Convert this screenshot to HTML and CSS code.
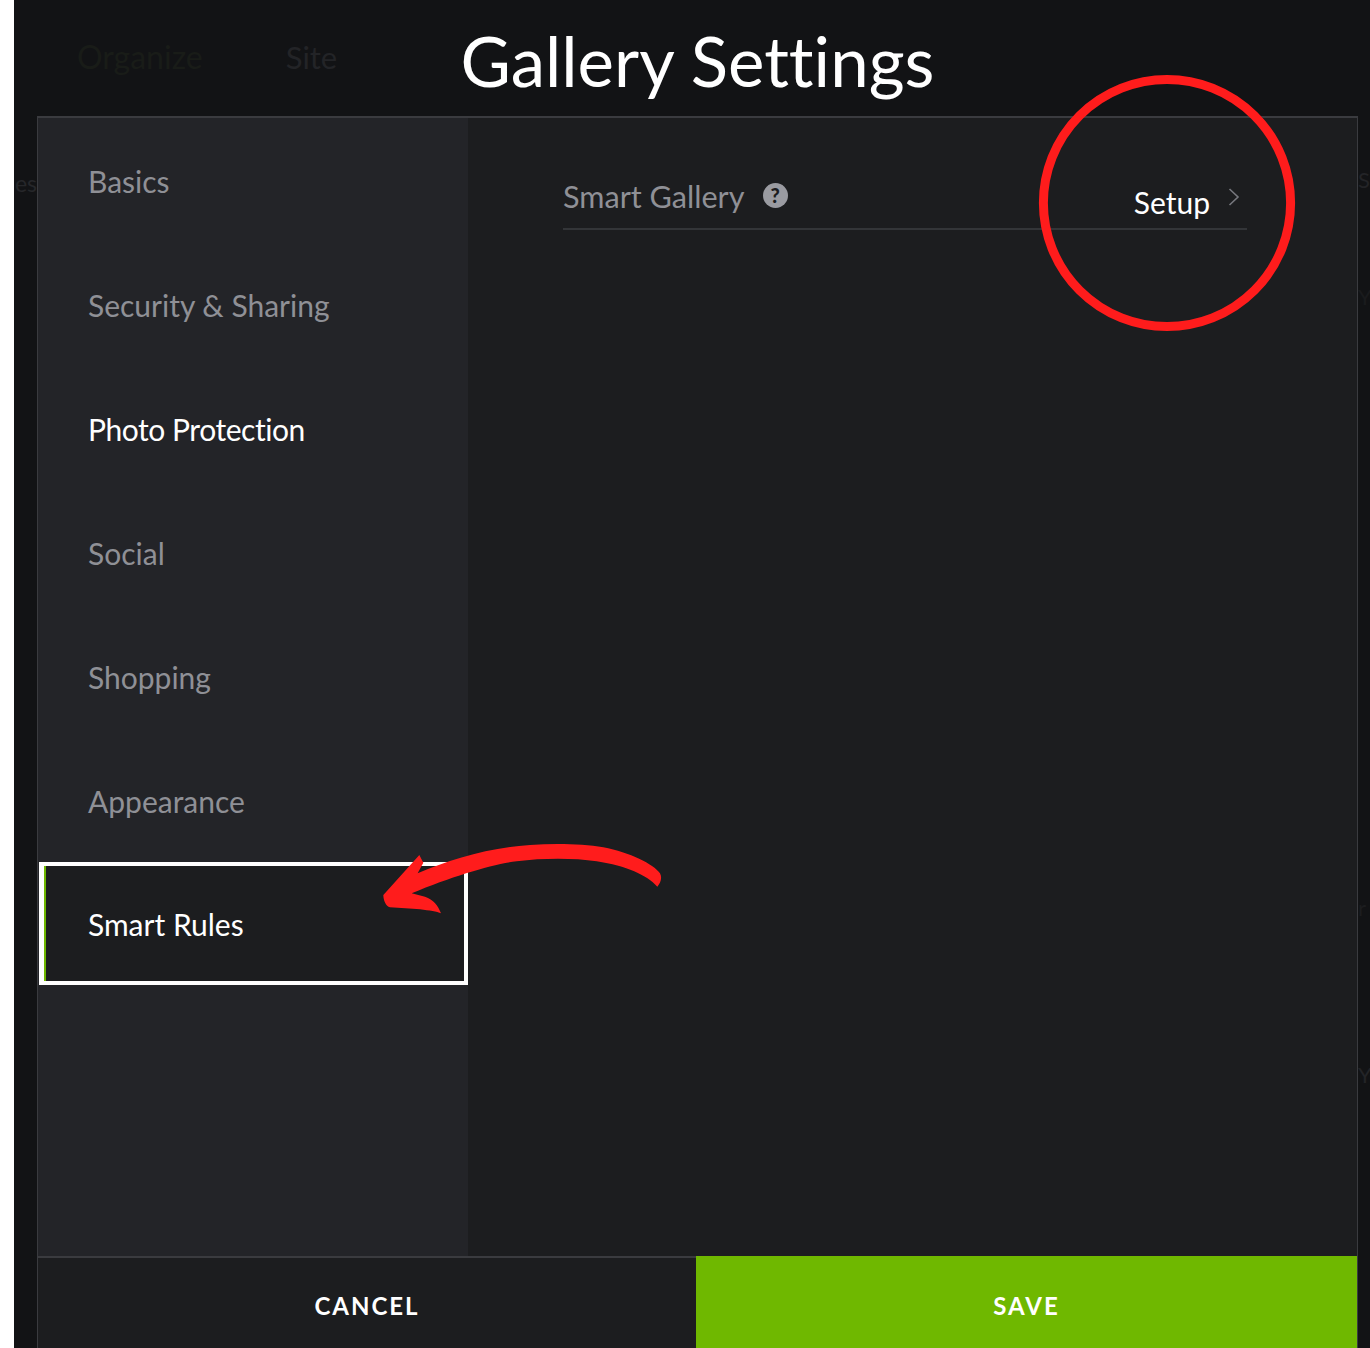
FILE: index.html
```html
<!DOCTYPE html>
<html lang="en">
<head>
<meta charset="utf-8">
<title>Gallery Settings</title>
<link rel="stylesheet" href="styles.css">
</head>
<body>
<div class="page">
  <div class="strip"></div>
  <div class="stage">
    <header class="header">
      <nav class="ghost-nav">
        <span class="ghost-organize">Organize</span>
        <span class="ghost-site">Site</span>
      </nav>
      <h1 class="title">Gallery Settings</h1>
      <div></div>
    </header>
    <div class="middle">
      <div class="gutter gutter-left"><span class="ghost-es">es</span></div>
      <main class="modal">
        <div class="modal-body">
          <aside class="sidebar">
            <div class="item">Basics</div>
            <div class="item">Security &amp; Sharing</div>
            <div class="item item-light">Photo Protection</div>
            <div class="item">Social</div>
            <div class="item">Shopping</div>
            <div class="item">Appearance</div>
            <div class="item item-active">Smart Rules</div>
          </aside>
          <section class="content">
            <div class="setting">
              <div class="setting-label">
                <span>Smart Gallery</span>
                <span class="help">?</span>
              </div>
              <div class="setting-action">
                <span>Setup</span>
                <svg class="chevron" width="12" height="20" viewBox="0 0 12 20"><path d="M1.5 2 L10 10 L1.5 18" fill="none" stroke="#77787e" stroke-width="1.6"/></svg>
              </div>
            </div>
          </section>
        </div>
        <footer class="footer">
          <div class="btn btn-cancel">CANCEL</div>
          <div class="btn btn-save">SAVE</div>
        </footer>
      </main>
      <div class="gutter gutter-right">
        <span class="ghost-s">S</span>
        <span class="ghost-t">Y</span>
        <span class="ghost-r">r</span>
        <span class="ghost-y">Y</span>
      </div>
    </div>
  </div>
</div>
<svg class="annotations" width="1370" height="1348" viewBox="0 0 1370 1348">
  <circle cx="1167" cy="203" r="123.6" fill="none" stroke="#ff1c1c" stroke-width="9"/>
  <path transform="translate(370 840) scale(0.33333)" fill="#ff1c1c" d="M40 165 L148 45 L160 68 L143 100 C240 58 360 22 480 15 C560 10 640 12 700 22 C780 38 850 72 870 100 C878 115 870 130 862 140 C830 105 770 78 680 64 C610 54 520 54 440 64 C370 72 250 108 125 160 L165 170 C190 178 205 198 213 220 C190 210 120 205 60 202 C48 200 40 180 40 165 Z"/>
</svg>
</body>
</html>
```
FILE: styles.css
```css
* { box-sizing: border-box; }
html, body { margin: 0; padding: 0; background: #fff; }
body { font-family: "Lato", "Liberation Sans", sans-serif; font-variant-ligatures: none; width: 1370px; height: 1348px; overflow: hidden; position: relative; }
.page { display: flex; width: 1370px; height: 1348px; }
.strip { width: 14px; background: #fff; flex: none; }
.stage { flex: 1; display: flex; flex-direction: column; background: #121315; min-width: 0; }
.header { height: 116px; flex: none; display: grid; grid-template-columns: 1fr auto 1fr; padding: 0 12px 0 23px; align-items: center; }
.ghost-nav { display: flex; gap: 83px; padding-left: 40px; font-size: 32px; align-self: start; margin-top: 37px; line-height: 40px; }
.ghost-organize { color: #191c18; }
.ghost-site { color: #232427; font-size: 31px; }
.title { margin: 0; font-size: 69px; font-weight: 400; color: #fff; line-height: 1; white-space: nowrap; margin-top: 5px; }
.middle { flex: 1; display: flex; min-height: 0; }
.gutter { flex: none; display: flex; flex-direction: column; font-size: 23px; line-height: 34px; color: #232427; padding-top: 50px; white-space: nowrap; }
.gutter-left { width: 23px; align-items: flex-end; }
.gutter-right { width: 12px; padding-top: 47px; font-size: 22px; }
.ghost-es { color: #26272a; }
.ghost-s { color: #232427; }
.ghost-t { color: #1a1b1d; margin-top: 83px; }
.ghost-r { color: #1c1d1f; margin-top: 577px; }
.ghost-y { color: #232427; margin-top: 133px; }
.modal { flex: 1; display: flex; flex-direction: column; background: #1c1d1f; border: 1px solid #3a3b3f; border-top-width: 2px; border-bottom: none; min-width: 0; }
.modal-body { flex: 1; display: flex; min-height: 0; }
.sidebar { width: 430px; flex: none; background: #232428; }
.item { height: 124px; display: flex; align-items: center; padding-left: 50px; padding-top: 2px; font-size: 30px; color: #8f9096; }
.item-light { color: #fff; letter-spacing: -0.45px; }
.item-active { color: #fff; background: #1c1d1f; border: 4px solid #fff; border-left: 5px solid #fff; padding-left: 44px; padding-top: 0; height: 123px; box-shadow: inset 2px 0 0 #6fb800; margin-left: 1px; }
.content { flex: 1; padding: 48px 110px 0 95px; }
.setting { display: flex; justify-content: space-between; align-items: center; height: 64px; border-bottom: 2px solid #333538; }
.setting-label { display: flex; align-items: center; gap: 18px; font-size: 30.6px; color: #8f9096; padding-bottom: 1px; }
.help { width: 25px; height: 25px; border-radius: 50%; background: #9a9ba1; color: #1c1d1f; font-size: 20px; font-weight: 900; display: flex; align-items: center; justify-content: center; line-height: 1; margin-top: -3px; }
.setting-action { display: flex; align-items: center; gap: 18px; font-size: 30px; color: #fff; padding-right: 7px; padding-top: 10px; }
.chevron { margin-top: -11px; }
.footer { height: 92px; flex: none; display: flex; border-top: 2px solid #3a3b3f; }
.btn { display: flex; align-items: center; justify-content: center; font-size: 24px; font-weight: 700; color: #fff; letter-spacing: 2px; }
.btn-cancel { width: 658px; flex: none; background: #1c1d1f; padding-top: 5px; }
.btn-save { flex: 1; background: #6fb800; margin-top: -2px; padding-top: 7px; }
.annotations { position: absolute; left: 0; top: 0; pointer-events: none; }
```
